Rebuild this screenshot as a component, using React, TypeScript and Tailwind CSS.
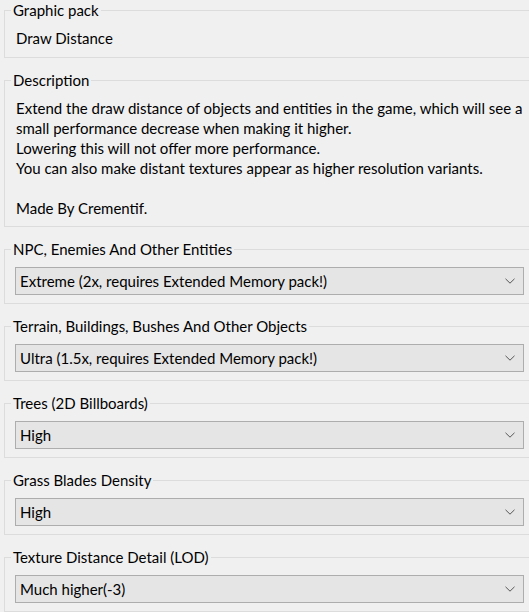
const font = { fontFamily: "Lato, 'Open Sans', sans-serif" };

function Group({ title, children, className = "" }: { title: string; children: React.ReactNode; className?: string }) {
  return (
    <fieldset className={`ml-[4px] mr-[-20px] border border-[#dcdcdc] ${className}`}>
      <legend className="ml-[6px] px-[2px] text-[15px] leading-[20px] text-black">{title}</legend>
      {children}
    </fieldset>
  );
}

function Select({ value }: { value: string }) {
  return (
    <div className="mt-[8px] ml-[10px] mr-[24px] flex h-[28px] items-center justify-between border border-[#adadad] bg-[#e5e5e5] pl-[4px] pr-[8px]">
      <span className="text-[15px] leading-[20px] text-black">{value}</span>
      <svg width="10" height="6" viewBox="0 0 10 6" className="text-[#555]">
        <polyline points="0.5,0.8 5,5.2 9.5,0.8" fill="none" stroke="currentColor" strokeWidth="1" />
      </svg>
    </div>
  );
}

const options = [
  { title: "NPC, Enemies And Other Entities", value: "Extreme (2x, requires Extended Memory pack!)" },
  { title: "Terrain, Buildings, Bushes And Other Objects", value: "Ultra (1.5x, requires Extended Memory pack!)" },
  { title: "Trees (2D Billboards)", value: "High" },
  { title: "Grass Blades Density", value: "High" },
  { title: "Texture Distance Detail (LOD)", value: "Much higher(-3)" },
];

export default function App() {
  return (
    <div className="h-[612px] w-[529px] overflow-hidden bg-[#f0f0f0]" style={font}>
      <div className="flex flex-col gap-[12px]">
        <Group title="Graphic pack" className="pb-[9px]">
          <div className="mt-[8px] pl-[11px] text-[15px] leading-[20px] text-black">Draw Distance</div>
        </Group>
        <Group title="Description" className="pb-[8px]">
          <div className="mt-[8px] pl-[11px] pr-[20px] text-[15px] leading-[20px] text-black">
            <p>Extend the draw distance of objects and entities in the game, which will see a</p>
            <p>small performance decrease when making it higher.</p>
            <p>Lowering this will not offer more performance.</p>
            <p>You can also make distant textures appear as higher resolution variants.</p>
            <p>&nbsp;</p>
            <p>Made By Crementif.</p>
          </div>
        </Group>
        {options.map((o) => (
          <Group key={o.title} title={o.title} className="pb-[8px]">
            <Select value={o.value} />
          </Group>
        ))}
      </div>
    </div>
  );
}
